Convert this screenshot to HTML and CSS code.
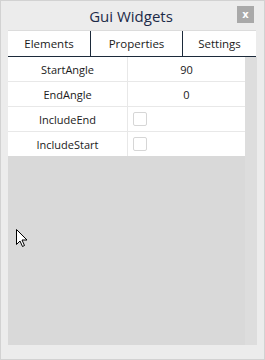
FILE: index.html
```html
<!DOCTYPE html>
<html lang="en">
<head>
  <meta charset="UTF-8">
  <title>Gui Widgets</title>
  <link rel="stylesheet" href="styles.css">
</head>
<body>
  <div class="window">
    <div class="titlebar">
      <span></span>
      <span class="title">Gui Widgets</span>
      <button class="close">x</button>
    </div>
    <div class="panel">
      <div class="tabs">
        <div class="tab tab-elements">Elements</div>
        <div class="tab tab-properties">Properties</div>
        <div class="tab tab-settings">Settings</div>
      </div>
      <div class="content">
        <div class="grid">
          <div class="row"><div class="cell label">StartAngle</div><div class="cell value">90</div></div>
          <div class="row"><div class="cell label">EndAngle</div><div class="cell value">0</div></div>
          <div class="row"><div class="cell label">IncludeEnd</div><div class="cell check"><span class="box"></span></div></div>
          <div class="row"><div class="cell label">IncludeStart</div><div class="cell check"><span class="box"></span></div></div>
        </div>
        <div class="track"></div>
      </div>
    </div>
    <svg class="cursor" width="12" height="19" viewBox="0 0 12 19">
      <path d="M0.5 0.5 L0.5 15.5 L4 12 L6.5 17.5 L8.5 16.5 L6 11 L11 11 Z" fill="#fff" stroke="#000" stroke-width="1"/>
    </svg>
  </div>
</body>
</html>
```

FILE: styles.css
```css
body {
  margin: 0;
  font-family: 'Open Sans', 'Noto Sans', sans-serif;
  background-color: #ececec;
}
.window {
  position: relative;
  width: 265px;
  height: 360px;
  box-sizing: border-box;
  border: 1px solid #d2d2d2;
  background-color: #ececec;
}
.titlebar {
  display: grid;
  grid-template-columns: 1fr auto 1fr;
  align-items: center;
  height: 29px;
  padding: 0 10px 0 7px;
}
.title {
  font-size: 15px;
  color: #1c2a48;
}
.close {
  justify-self: end;
  width: 17px;
  height: 17px;
  margin-top: -2px;
  padding: 0;
  border: none;
  background-color: #a9a9a9;
  color: white;
  font-family: 'DejaVu Sans', sans-serif;
  font-size: 10px;
  font-weight: bold;
  line-height: 15px;
}
.panel {
  margin: 0 7px;
}
.tabs {
  display: flex;
  height: 25px;
  background-color: white;
  border-top: 1px solid #dcdcdc;
  border-bottom: 1px solid #1c2a3a;
  margin-right: 1px;
}
.tab {
  display: flex;
  align-items: center;
  justify-content: center;
  font-size: 11.5px;
  color: #1a1a1a;
}
.tab-elements {
  width: 82px;
  border-right: 1px solid #1c2a3a;
}
.tab-properties {
  width: 91px;
  border-right: 1px solid #1c2a3a;
}
.tab-settings {
  flex: 1;
}
.content {
  display: flex;
  height: 288px;
  background-color: #d9d9d9;
}
.grid {
  width: 237px;
  align-self: flex-start;
  background-color: white;
}
.track {
  flex: 1;
  background-color: #dddddd;
}
.row {
  display: flex;
  height: 24px;
  border-bottom: 1px solid #e8e8e8;
}
.row:last-child {
  border-bottom: none;
}
.cell {
  display: flex;
  align-items: center;
  font-size: 11px;
  color: #1a1a1a;
}
.label {
  width: 119px;
  justify-content: center;
  border-right: 1px solid #e8e8e8;
}
.value {
  flex: 1;
  justify-content: center;
}
.check {
  flex: 1;
  padding-left: 5px;
}
.box {
  width: 12px;
  height: 12px;
  border: 1px solid #d6d6d6;
  border-radius: 2px;
  background-color: white;
}
.cursor {
  position: absolute;
  left: 15px;
  top: 228px;
}
```
